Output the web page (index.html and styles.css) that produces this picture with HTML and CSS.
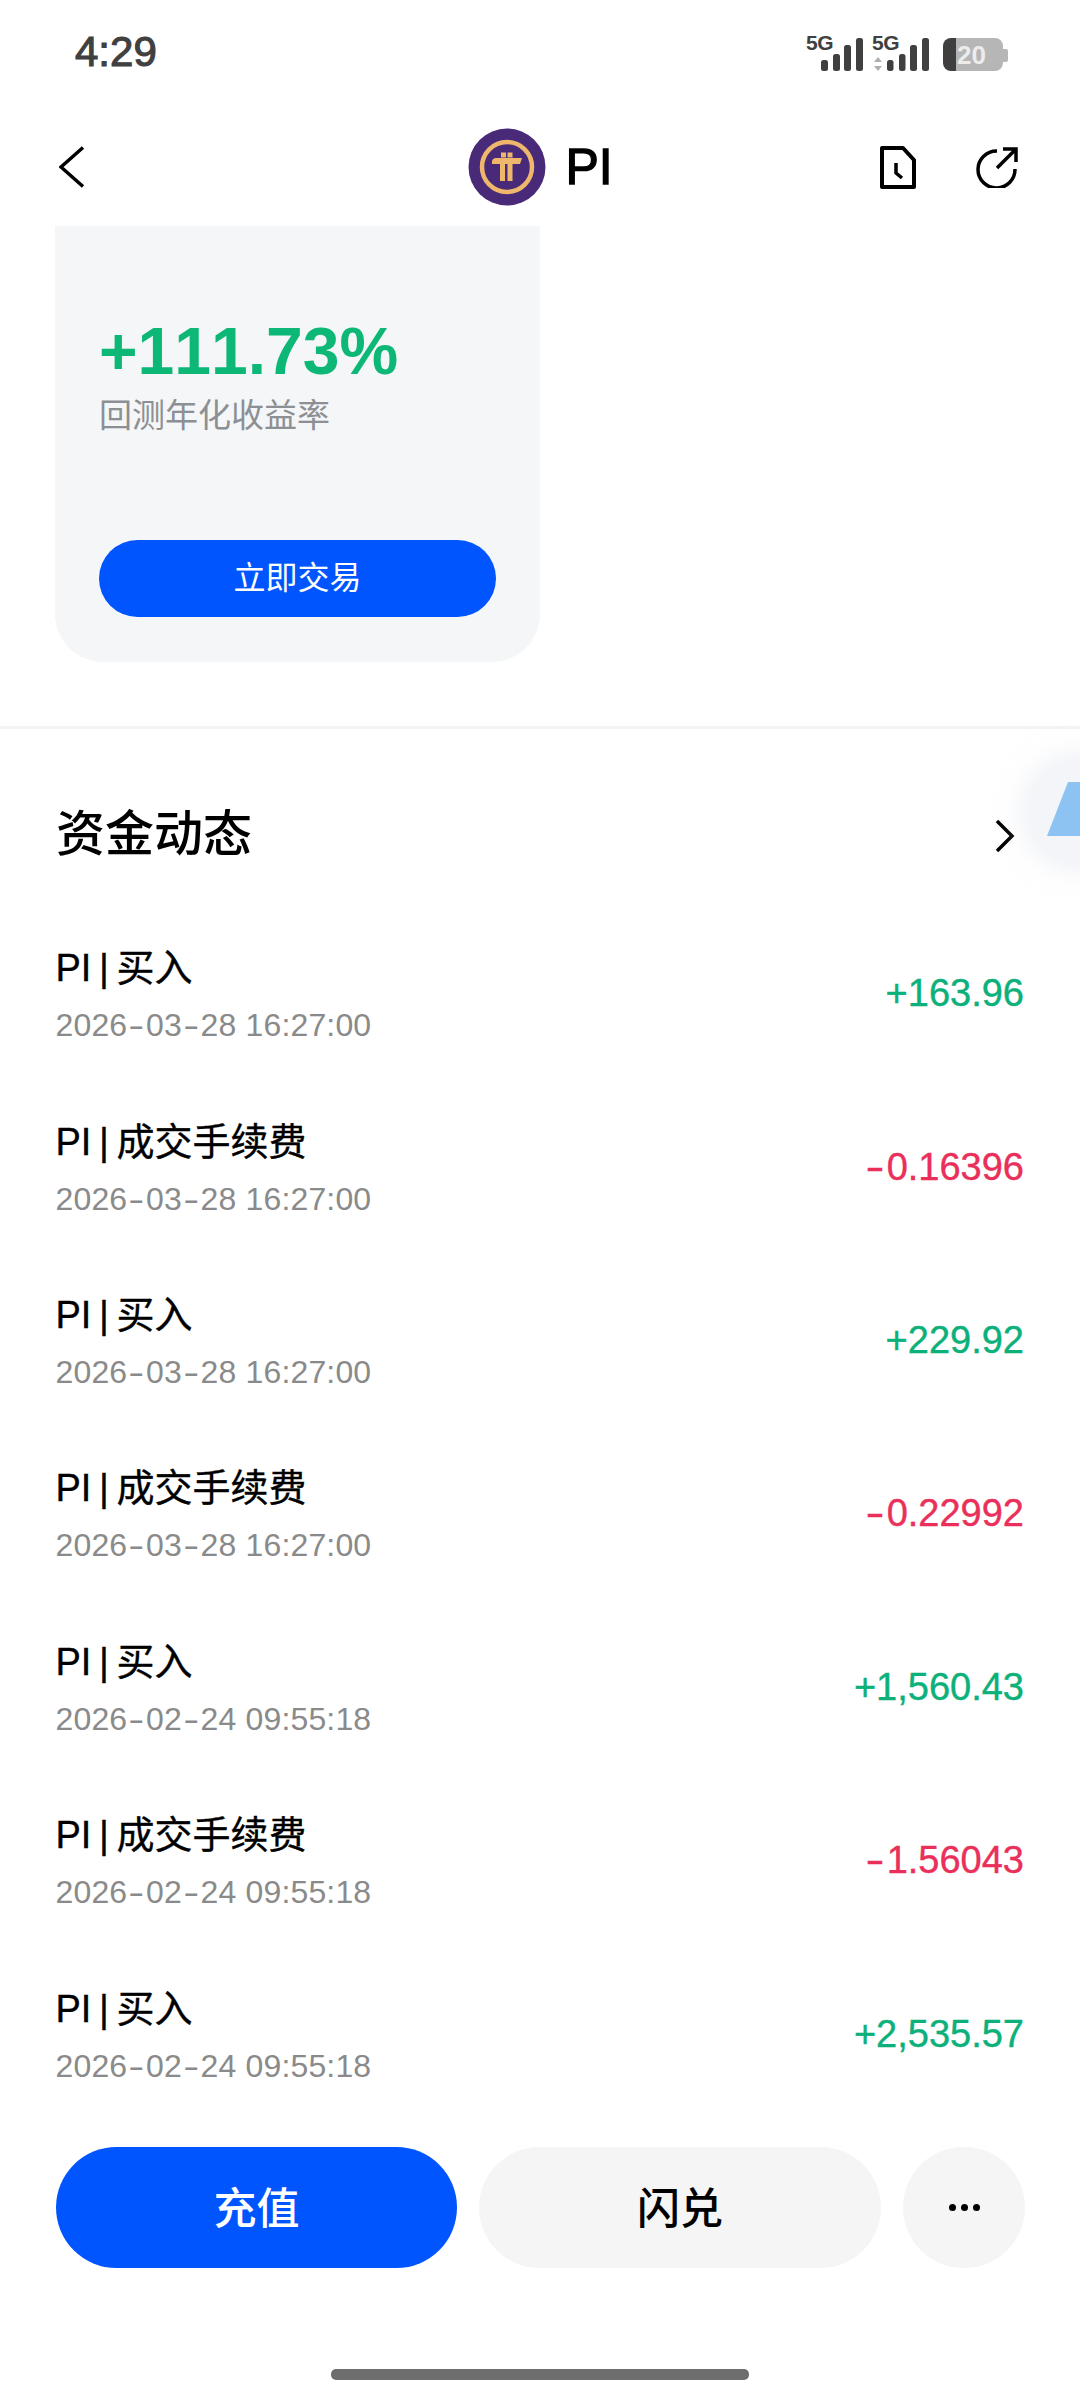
FILE: index.html
```html
<!DOCTYPE html>
<html lang="zh">
<head>
<meta charset="utf-8">
<title>PI</title>
<link rel="stylesheet" href="styles.css">
</head>
<body>
<div class="app">
  <div class="status">
    <span class="time">4:29</span>
    <div class="sys">
      <svg class="sys-icon" width="202" height="38" viewBox="806 31 202 38">
        <g fill="#404040">
          <rect x="821" y="57" width="7" height="11" rx="2.5"/><rect x="833" y="51" width="7" height="17" rx="2.5"/><rect x="844" y="42" width="7" height="26" rx="2.5"/><rect x="856" y="35" width="7" height="33" rx="2.5"/>
          <rect x="887" y="57" width="6.5" height="11" rx="2.5"/><rect x="899" y="51" width="6.5" height="17" rx="2.5"/><rect x="910" y="42" width="7" height="26" rx="2.5"/><rect x="922" y="35" width="7" height="33" rx="2.5"/>
        </g>
        <path d="M878 54l4 5h-8zM878 68l4-5h-8z" fill="#b0b0b0"/>
        <path d="M955 35h40a8 8 0 0 1 8 8v3h3a2 2 0 0 1 2 2v9a2 2 0 0 1-2 2h-3v1a8 8 0 0 1-8 8h-40z" fill="#b6b6b6"/>
        <path d="M956 35h-5a8 8 0 0 0-8 8v17a8 8 0 0 0 8 8h5z" fill="#3f3f3f"/>
      </svg>
      <span class="net net-a">5G</span>
      <span class="net net-b">5G</span>
      <span class="batt">20</span>
    </div>
  </div>

  <header class="nav">
    <svg class="back" width="26" height="42" viewBox="0 0 26 42"><path d="M24 1.500L2 21l22 19.500" fill="none" stroke="#000" stroke-width="3.500"/></svg>
    <div class="coin">
      <svg class="logo" width="78" height="78" viewBox="0 0 78 78">
        <circle cx="39" cy="39" r="38.500" fill="#482a78"/>
        <circle cx="39" cy="39" r="25" fill="none" stroke="#efb76b" stroke-width="4.500"/>
        <g fill="#efb76b">
          <rect x="33" y="24.500" width="5" height="5"/><rect x="39.500" y="24.500" width="5" height="5"/>
          <path d="M24 33q1-3 4-3h26l-2 6H24z"/>
          <rect x="32" y="35" width="5" height="18"/><rect x="39.500" y="35" width="5" height="18"/>
        </g>
      </svg>
      <span class="coin-name">PI</span>
    </div>
    <div class="nav-actions">
      <svg width="36" height="43" viewBox="0 0 36 43"><path d="M2 2h21l11 12v27H2z" fill="none" stroke="#000" stroke-width="4" stroke-linejoin="round"/><path d="M16 17v10l6 5" fill="none" stroke="#000" stroke-width="3.500"/></svg>
      <svg width="42" height="42" viewBox="0 0 42 42"><path d="M21 5A18.500 18.500 0 1 0 39 23" fill="none" stroke="#000" stroke-width="3.500"/><path d="M21 22L39 4M27 3h13v13" fill="none" stroke="#000" stroke-width="3.500"/></svg>
    </div>
  </header>

  <main class="content">
    <section class="card">
      <div class="pct">+111.73%</div>
      <div class="pct-label">回测年化收益率</div>
      <button class="trade">立即交易</button>
    </section>
    <div class="divider"></div>

    <div class="section-head">
      <h2>资金动态</h2>
      <svg width="20" height="34" viewBox="0 0 20 34"><path d="M2 2l15 15L2 32" fill="none" stroke="#000" stroke-width="3.500"/></svg>
    </div>

    <div class="float-btn"><i class="float-mark"></i></div>

    <ul class="list">
      <li class="row"><div><div class="r-title">PI | 买入</div><div class="r-date">2026<b class="d">-</b>03<b class="d">-</b>28 16:27:00</div></div><div class="amt up">+163.96</div></li>
      <li class="row"><div><div class="r-title">PI | 成交手续费</div><div class="r-date">2026<b class="d">-</b>03<b class="d">-</b>28 16:27:00</div></div><div class="amt down"><b class="d">-</b>0.16396</div></li>
      <li class="row"><div><div class="r-title">PI | 买入</div><div class="r-date">2026<b class="d">-</b>03<b class="d">-</b>28 16:27:00</div></div><div class="amt up">+229.92</div></li>
      <li class="row"><div><div class="r-title">PI | 成交手续费</div><div class="r-date">2026<b class="d">-</b>03<b class="d">-</b>28 16:27:00</div></div><div class="amt down"><b class="d">-</b>0.22992</div></li>
      <li class="row"><div><div class="r-title">PI | 买入</div><div class="r-date">2026<b class="d">-</b>02<b class="d">-</b>24 09:55:18</div></div><div class="amt up">+1,560.43</div></li>
      <li class="row"><div><div class="r-title">PI | 成交手续费</div><div class="r-date">2026<b class="d">-</b>02<b class="d">-</b>24 09:55:18</div></div><div class="amt down"><b class="d">-</b>1.56043</div></li>
      <li class="row"><div><div class="r-title">PI | 买入</div><div class="r-date">2026<b class="d">-</b>02<b class="d">-</b>24 09:55:18</div></div><div class="amt up">+2,535.57</div></li>
    </ul>
  </main>

  <footer class="footer">
    <div class="actions">
      <button class="btn primary"><span>充值</span></button>
      <button class="btn ghost"><span>闪兑</span></button>
      <button class="btn more"><i></i><i></i><i></i></button>
    </div>
    <div class="home"></div>
  </footer>
</div>
</body>
</html>
```

FILE: styles.css
```css
* { box-sizing: border-box; }
html, body { margin: 0; padding: 0; background: #fff; }
body { font-family: "Liberation Sans", "Noto Sans CJK SC", sans-serif; color: #000; font-kerning: none; }
.app { width: 1080px; height: 2400px; display: flex; flex-direction: column; overflow: hidden; background: #fff; }

.status { height: 108px; flex: none; display: flex; align-items: center; justify-content: space-between; padding: 0 72px 4px 75px; }
.time { font-size: 42px; line-height: 50px; color: #404040; font-weight: 400; -webkit-text-stroke: 1.1px #404040; }
.sys { position: relative; width: 202px; height: 38px; margin-top: 2px; }
.sys-icon { display: block; }
.net { position: absolute; top: 0; font-size: 21px; line-height: 17px; font-weight: 700; color: #404040; letter-spacing: -0.5px; }
.net-a { left: 0; }
.net-b { left: 66px; }
.batt { position: absolute; left: 151px; top: 10px; font-size: 26px; line-height: 22px; font-weight: 700; color: #ececec; }

.nav { height: 118px; flex: none; position: relative; display: flex; align-items: center; justify-content: center; padding: 0 62px 0 59px; }
.back { position: absolute; left: 59px; top: 38px; }
.coin { display: flex; align-items: center; gap: 19px; margin-left: 4px; }
.logo { display: block; }
.coin-name { font-size: 50px; line-height: 60px; -webkit-text-stroke: 1.3px #000; }
.nav-actions { position: absolute; right: 62px; top: 38px; display: flex; align-items: flex-start; gap: 60px; }
.nav-actions svg { display: block; }

.content { flex: 1; min-height: 0; overflow: hidden; position: relative; }
.card { width: 485px; height: 436px; margin-left: 55px; padding: 92px 44px 45px; display: flex; flex-direction: column; background: #f4f6f8; border-radius: 0 0 48px 48px; }
.pct { font-size: 66px; line-height: 66px; font-weight: 700; color: #0db877; }
.pct-label { margin-top: 10px; font-size: 33px; line-height: 44px; color: #8c8f93; font-weight: 400; }
.trade { margin-top: auto; height: 77px; border: 0; border-radius: 39px; background: #0055ff; color: #fff; font: inherit; font-size: 32px; padding: 0 0 7px; }
.divider { height: 3px; margin-top: 64px; background: #f2f3f5; }

.section-head { height: 178px; padding: 76px 65px 46px 56px; display: flex; align-items: center; justify-content: space-between; position: relative; }
.section-head h2 { margin: 2px 0 0; font-size: 49px; line-height: 56px; font-weight: 500; }
.section-head svg { margin-top: 6px; display: block; }

.float-btn { position: absolute; left: 1030px; top: 536px; width: 100px; height: 100px; border-radius: 50%; background: #f3f5f8; box-shadow: 0 0 24px 10px rgba(228, 232, 238, 0.55); overflow: hidden; }
.float-mark { position: absolute; left: 17px; top: 20px; width: 40px; height: 54px; background: #8cc3f2; clip-path: polygon(21px 0, 100% 0, 100% 100%, 0 100%); }

.list { list-style: none; margin: 0; padding: 0; }
.row { height: 173.4px; padding: 3px 56px 0 55.5px; display: flex; align-items: center; justify-content: space-between; }
.r-title { font-size: 38px; line-height: 50px; word-spacing: -3px; -webkit-text-stroke: 0.35px #000; }
.r-date { margin-top: 10px; font-size: 32px; line-height: 44px; color: #8a8a8a; letter-spacing: 0.15px; }
.amt { font-size: 38px; line-height: 48px; padding-bottom: 4px; -webkit-text-stroke: 0.4px currentColor; }
.up { color: #0cb07a; }
.down { color: #ea2f5a; }
.d { display: inline-block; font-weight: 400; width: 0.584em; text-align: center; transform: scaleX(1.5); }

.footer { flex: none; height: 253px; display: flex; flex-direction: column; align-items: center; }
.actions { width: 100%; padding: 0 55px 0 56px; display: flex; gap: 22px; }
.btn { height: 121px; border: 0; border-radius: 61px; font: inherit; font-size: 43px; font-weight: 500; padding: 0 0 6px; }
.primary { width: 401px; background: #0055ff; color: #fff; }
.ghost { width: 402px; background: #f5f5f5; color: #000; }
.more { width: 122px; background: #f5f5f5; display: flex; align-items: center; justify-content: center; gap: 5px; padding: 0; }
.more i { width: 7px; height: 7px; border-radius: 50%; background: #000; }
.home { width: 418px; height: 11px; margin-top: 101px; border-radius: 5px; background: #6e6e6e; }
```
